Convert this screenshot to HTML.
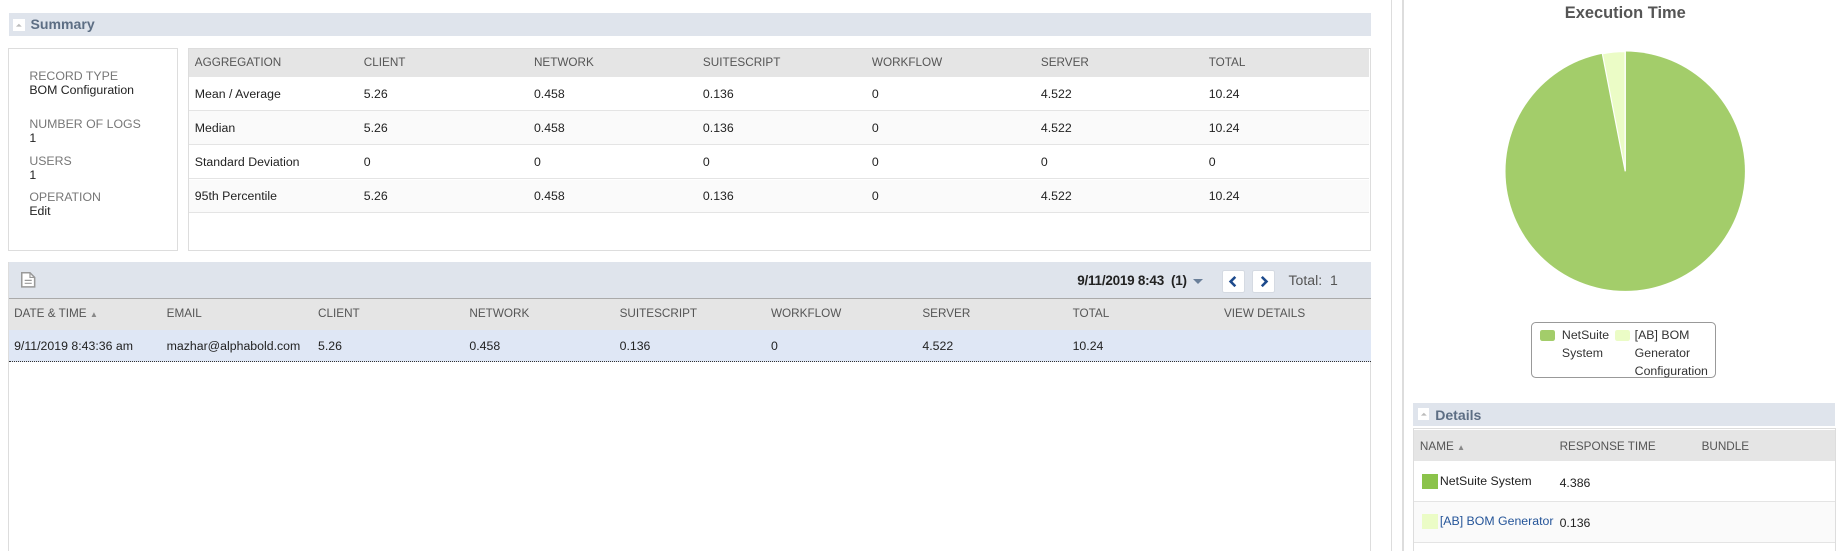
<!DOCTYPE html>
<html><head><meta charset="utf-8"><style>
html,body{margin:0;padding:0;background:#fff;width:1840px;height:551px;overflow:hidden}
#w{zoom:1.1735;position:relative;width:1568px;height:470px;font-family:"Liberation Sans",Arial,sans-serif;font-size:10.5px;color:#222}
.a{position:absolute}
.bar{position:absolute;background:#dfe4ec}
.tog{position:absolute;width:10px;height:10px;background:#fff}
.ttl{position:absolute;font-weight:bold;color:#5d6e84;font-size:12px}
.hd{position:absolute;background:#e5e5e5;font-size:10px;color:#555}
.lbl{color:#777;font-size:10.5px}
.c{position:absolute;white-space:nowrap}
.row{position:absolute;border-bottom:1px solid #e4e4e4}
</style></head><body><div id="w">

<div class="bar" style="left:8px;top:11px;width:1160px;height:20px"></div>
<div class="tog" style="left:11px;top:16px"><svg width="10" height="10"><path d="M2.5 6.5L5 4L7.5 6.5Z" fill="#bbb"/></svg></div>
<div class="ttl" style="left:26px;top:14px">Summary</div>

<div class="a" style="left:7px;top:41px;width:143px;height:171px;border:1px solid #ddd"></div>
<div class="a" style="left:25px;top:59px;line-height:12px">
<div class="lbl">RECORD TYPE</div><div>BOM Configuration</div>
<div class="lbl" style="margin-top:17px">NUMBER OF LOGS</div><div>1</div>
<div class="lbl" style="margin-top:7px">USERS</div><div>1</div>
<div class="lbl" style="margin-top:7px">OPERATION</div><div>Edit</div>
</div>

<div class="a" style="left:160px;top:41px;width:1007px;height:171px;border:1px solid #ddd"></div>
<div class="hd" style="left:161px;top:42px;width:1006px;height:24px"></div>
<div class="row" style="left:161px;top:66px;width:1006px;height:28px;background:#fff"></div>
<div class="row" style="left:161px;top:95px;width:1006px;height:28px;background:#fafafa"></div>
<div class="row" style="left:161px;top:124px;width:1006px;height:28px;background:#fff"></div>
<div class="row" style="left:161px;top:153px;width:1006px;height:28px;background:#fafafa"></div>
<div class="a" style="left:0;top:48px;color:#555;font-size:10px">
<span class="c" style="left:166px">AGGREGATION</span><span class="c" style="left:310px">CLIENT</span><span class="c" style="left:455px">NETWORK</span><span class="c" style="left:599px">SUITESCRIPT</span><span class="c" style="left:743px">WORKFLOW</span><span class="c" style="left:887px">SERVER</span><span class="c" style="left:1030px">TOTAL</span></div>
<div class="a" style="left:0;top:74px"><span class="c" style="left:166px">Mean / Average</span><span class="c" style="left:310px">5.26</span><span class="c" style="left:455px">0.458</span><span class="c" style="left:599px">0.136</span><span class="c" style="left:743px">0</span><span class="c" style="left:887px">4.522</span><span class="c" style="left:1030px">10.24</span></div>
<div class="a" style="left:0;top:103px"><span class="c" style="left:166px">Median</span><span class="c" style="left:310px">5.26</span><span class="c" style="left:455px">0.458</span><span class="c" style="left:599px">0.136</span><span class="c" style="left:743px">0</span><span class="c" style="left:887px">4.522</span><span class="c" style="left:1030px">10.24</span></div>
<div class="a" style="left:0;top:132px"><span class="c" style="left:166px">Standard Deviation</span><span class="c" style="left:310px">0</span><span class="c" style="left:455px">0</span><span class="c" style="left:599px">0</span><span class="c" style="left:743px">0</span><span class="c" style="left:887px">0</span><span class="c" style="left:1030px">0</span></div>
<div class="a" style="left:0;top:161px"><span class="c" style="left:166px">95th Percentile</span><span class="c" style="left:310px">5.26</span><span class="c" style="left:455px">0.458</span><span class="c" style="left:599px">0.136</span><span class="c" style="left:743px">0</span><span class="c" style="left:887px">4.522</span><span class="c" style="left:1030px">10.24</span></div>

<div class="a" style="left:7px;top:223px;width:1160px;height:260px;border-left:1px solid #ddd;border-right:1px solid #ddd"></div>
<div class="bar" style="left:8px;top:223px;width:1160px;height:31px"></div>
<svg class="a" style="left:17px;top:231px" width="14" height="15" viewBox="0 0 14 15"><path d="M1.5 1.5h7l4 4v8h-11z" fill="#fff" stroke="#999" stroke-width="1.3"/><path d="M8.5 1.5v4h4M4 8h6M4 10.5h6" fill="none" stroke="#999"/></svg>
<div class="a" style="left:918px;top:233px;font-weight:bold;font-size:11.5px;color:#222;letter-spacing:-0.2px">9/11/2019 8:43&nbsp; (1)</div>
<div class="a" style="left:1017px;top:238px;border-left:5px solid transparent;border-right:5px solid transparent;border-top:5px solid #6a7f99"></div>
<div class="a" style="left:1041px;top:230px;width:18px;height:18px;background:#fff;border:1px solid #d5dae2;border-radius:2px"><svg width="18" height="18"><path d="M10.5 5L6.5 9L10.5 13" fill="none" stroke="#1d4a8c" stroke-width="2.2"/></svg></div>
<div class="a" style="left:1067px;top:230px;width:18px;height:18px;background:#fff;border:1px solid #d5dae2;border-radius:2px"><svg width="18" height="18"><path d="M7.5 5L11.5 9L7.5 13" fill="none" stroke="#1d4a8c" stroke-width="2.2"/></svg></div>
<div class="a" style="left:1098px;top:232px;font-size:12px;color:#555">Total:&nbsp; 1</div>
<div class="hd" style="left:8px;top:254px;width:1160px;height:26px;border-top:1px solid #aaa"></div>
<div class="a" style="left:0;top:262px;color:#555;font-size:10px"><span class="c" style="left:12px">DATE &amp; TIME <span style="font-size:7px;color:#888">&#9650;</span></span><span class="c" style="left:142px">EMAIL</span><span class="c" style="left:271px">CLIENT</span><span class="c" style="left:400px">NETWORK</span><span class="c" style="left:528px">SUITESCRIPT</span><span class="c" style="left:657px">WORKFLOW</span><span class="c" style="left:786px">SERVER</span><span class="c" style="left:914px">TOTAL</span><span class="c" style="left:1043px">VIEW DETAILS</span></div>
<div class="a" style="left:8px;top:281px;width:1160px;height:27px;background:#dfe7f5;border-bottom:1px dotted #333"></div>
<div class="a" style="left:0;top:289px"><span class="c" style="left:12px">9/11/2019 8:43:36 am</span><span class="c" style="left:142px">mazhar@alphabold.com</span><span class="c" style="left:271px">5.26</span><span class="c" style="left:400px">0.458</span><span class="c" style="left:528px">0.136</span><span class="c" style="left:657px">0</span><span class="c" style="left:786px">4.522</span><span class="c" style="left:914px">10.24</span></div>

<div class="a" style="left:1185px;top:0;width:1px;height:470px;background:#ddd"></div>
<div class="a" style="left:1195px;top:0;width:1px;height:470px;background:#ddd"></div>

<div class="a" style="left:1285px;top:3px;width:200px;text-align:center;font-weight:bold;font-size:14px;color:#555">Execution Time</div>
<svg class="a" style="left:1280px;top:41px" width="210" height="210" viewBox="1280 41 210 210">
<circle cx="1385" cy="146" r="102" fill="#a3cd6a"/>
<path d="M1385 146L1385 44A102 102 0 0 0 1365.5 45.9Z" fill="#ebfcc6" stroke="#fff" stroke-width="1"/>
<line x1="1385" y1="146" x2="1385" y2="44" stroke="#fff" stroke-width="1"/>
</svg>
<div class="a" style="left:1305px;top:274px;width:156px;height:46px;border:1px solid #999;border-radius:4px;background:#fff"></div>
<div class="a" style="left:1312px;top:281px;width:13px;height:10px;background:#a3cd6a;border-radius:2px"></div>
<div class="a" style="left:1331px;top:279px;font-size:10.5px;color:#333;line-height:15px">NetSuite<br>System</div>
<div class="a" style="left:1376px;top:281px;width:13px;height:10px;background:#ebfcc6;border-radius:2px"></div>
<div class="a" style="left:1393px;top:279px;font-size:10.5px;color:#333;line-height:15px">[AB] BOM<br>Generator<br>Configuration</div>

<div class="bar" style="left:1204px;top:343px;width:360px;height:20px"></div>
<div class="tog" style="left:1208px;top:348px"><svg width="10" height="10"><path d="M2.5 6.5L5 4L7.5 6.5Z" fill="#bbb"/></svg></div>
<div class="ttl" style="left:1223px;top:347px">Details</div>
<div class="a" style="left:1204px;top:365px;width:359px;height:110px;border:1px solid #ddd"></div>
<div class="hd" style="left:1205px;top:366px;width:359px;height:27px"></div>
<div class="a" style="left:0;top:375px;color:#555;font-size:10px"><span class="c" style="left:1210px">NAME <span style="font-size:7px;color:#888">&#9650;</span></span><span class="c" style="left:1329px">RESPONSE TIME</span><span class="c" style="left:1450px">BUNDLE</span></div>
<div class="row" style="left:1205px;top:393px;width:359px;height:34px;background:#fff"></div>
<div class="row" style="left:1205px;top:428px;width:359px;height:34px;background:#fafafa"></div>
<div class="a" style="left:1212px;top:404px;width:13px;height:13px;background:#8bc34a"></div>
<div class="a" style="left:1227px;top:404px">NetSuite System</div>
<div class="a" style="left:1329px;top:406px">4.386</div>
<div class="a" style="left:1212px;top:438px;width:13px;height:13px;background:#ebfcc6"></div>
<div class="a" style="left:1227px;top:438px;color:#255599">[AB] BOM Generator</div>
<div class="a" style="left:1329px;top:440px">0.136</div>

</div></body></html>
